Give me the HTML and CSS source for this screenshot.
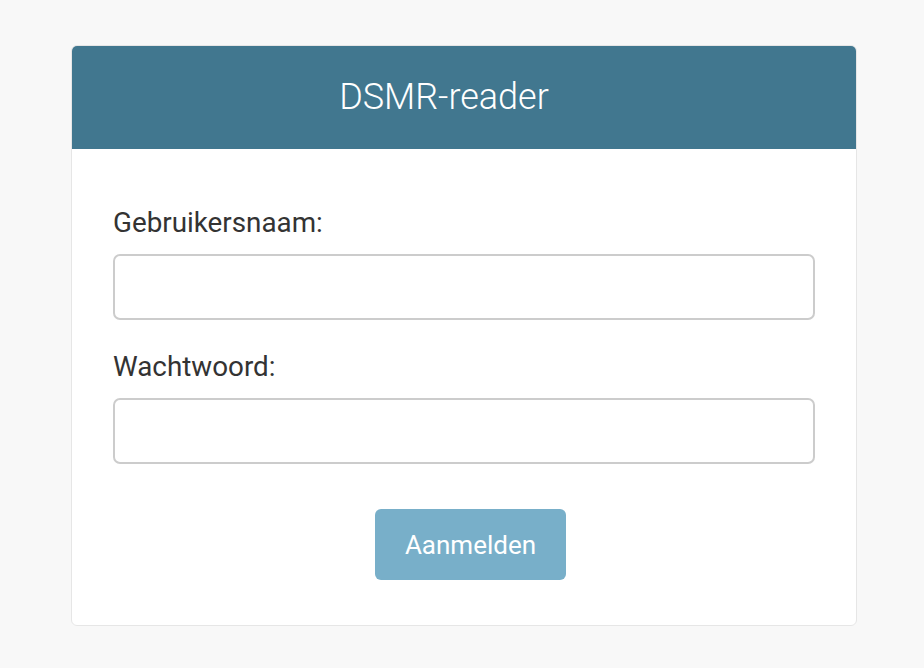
FILE: index.html
```html
<!DOCTYPE html>
<html>
<head>
<meta charset="utf-8">
<link rel="stylesheet" href="styles.css">
</head>
<body>
<div class="card">
  <div class="card-header"><h1 class="title">DSMR-reader</h1></div>
  <form class="card-body">
    <div class="field">
      <label class="label" for="u">Gebruikersnaam:</label>
      <input class="input" id="u" type="text">
    </div>
    <div class="field">
      <label class="label" for="p">Wachtwoord:</label>
      <input class="input" id="p" type="password">
    </div>
    <div class="actions">
      <button class="btn" type="button">Aanmelden</button>
    </div>
  </form>
</div>
</body>
</html>
```
FILE: styles.css
```css
html, body {
  margin: 0;
  padding: 0;
  background: #f8f8f8;
  font-family: Roboto, "Liberation Sans", sans-serif;
}
.card {
  margin: 45px 0 0 71px;
  width: 784px;
  background: #fff;
  border: 1px solid #e6e6e6;
  border-radius: 6px;
  overflow: hidden;
}
.card-header {
  background: #41778f;
  height: 104px;
  display: flex;
  align-items: center;
  justify-content: center;
  padding-right: 40px;
  margin: -1px -1px 0 -1px;
}
.title {
  margin: 0;
  color: #fff;
  font-weight: 300;
  font-size: 36px;
}
.card-body {
  display: flex;
  flex-direction: column;
  padding: 57px 41px 45px 41px;
}
.field {
  display: flex;
  flex-direction: column;
  margin-bottom: 30px;
}
.label {
  font-size: 27.8px;
  color: #333;
  line-height: 33px;
  margin-bottom: 15px;
}
.input {
  height: 66px;
  box-sizing: border-box;
  border: 2px solid #cccccc;
  border-radius: 7px;
  background: #fff;
  margin: 0;
  font-size: 20px;
}
.actions {
  display: flex;
  justify-content: center;
  padding-left: 13px;
  margin-top: 15px;
}
.btn {
  width: 191px;
  height: 71px;
  background: #78afc9;
  color: #fff;
  border: none;
  border-radius: 6px;
  font-family: Roboto, "Liberation Sans", sans-serif;
  font-size: 26px;
  font-weight: 400;
}
```
